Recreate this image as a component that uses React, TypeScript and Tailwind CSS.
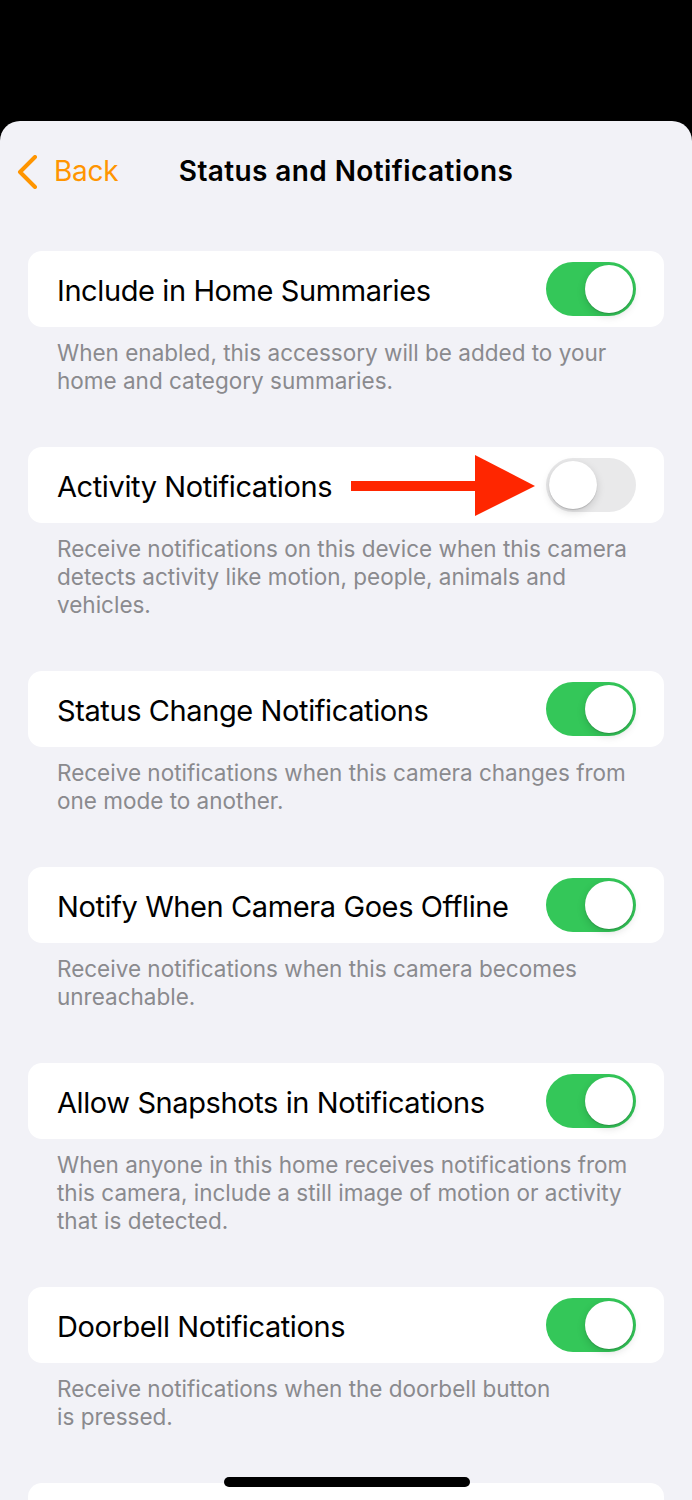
import React from 'react';

type Row = { title: string; footer: React.ReactNode; on: boolean; arrow?: boolean };

const rows: Row[] = [
  {
    title: 'Include in Home Summaries',
    footer: 'When enabled, this accessory will be added to your home and category summaries.',
    on: true,
  },
  {
    title: 'Activity Notifications',
    footer: 'Receive notifications on this device when this camera detects activity like motion, people, animals and vehicles.',
    on: false,
    arrow: true,
  },
  {
    title: 'Status Change Notifications',
    footer: 'Receive notifications when this camera changes from one mode to another.',
    on: true,
  },
  {
    title: 'Notify When Camera Goes Offline',
    footer: 'Receive notifications when this camera becomes unreachable.',
    on: true,
  },
  {
    title: 'Allow Snapshots in Notifications',
    footer: 'When anyone in this home receives notifications from this camera, include a still image of motion or activity that is detected.',
    on: true,
  },
  {
    title: 'Doorbell Notifications',
    footer: (
      <>
        Receive notifications when the doorbell button
        <br />
        is pressed.
      </>
    ),
    on: true,
  },
];

function Toggle({ on }: { on: boolean }) {
  return (
    <div
      className={`relative w-[90px] h-[54px] rounded-full shrink-0 ${on ? 'bg-[#34c759]' : 'bg-[#e9e9ea]'}`}
    >
      <div
        className={`absolute top-[3px] w-[48px] h-[48px] rounded-full bg-white shadow-[0_3px_8px_rgba(0,0,0,0.15),0_1px_1px_rgba(0,0,0,0.16)] ${on ? 'right-[3px]' : 'left-[3px]'}`}
      />
    </div>
  );
}

function Arrow() {
  return (
    <svg className="absolute left-[323px] top-[8px]" width="186" height="62" viewBox="0 0 186 62">
      <rect x="0" y="26" width="126" height="10" fill="#ff2600" />
      <polygon points="124,0 184,31 124,61" fill="#ff2600" />
    </svg>
  );
}

export default function App() {
  return (
    <div className="w-[692px] h-[1500px] bg-black overflow-hidden" style={{ fontFamily: 'Inter, "Noto Sans", sans-serif' }}>
      <div className="mt-[121px] h-[1379px] bg-[#f2f2f7] rounded-t-[20px] overflow-hidden">
        <div className="relative h-[100px] flex items-center">
          <div className="flex items-center pl-[16px] text-[#ff9500]">
            <svg width="22" height="34" viewBox="0 0 22 34" className="mt-[1px]">
              <path d="M19 2 L4 17 L19 32" fill="none" stroke="#ff9500" strokeWidth="4" strokeLinecap="round" strokeLinejoin="round" />
            </svg>
            <span className="ml-[16px] text-[28px] tracking-[-0.3px]">Back</span>
          </div>
          <div className="absolute left-0 right-0 text-center text-[28px] font-semibold text-black tracking-[0.4px]">
            Status and Notifications
          </div>
        </div>

        <div className="px-[28px] pt-[30px]">
          {rows.map((r) => (
            <div key={r.title} className="mb-[52px]">
              <div className="relative h-[76px] bg-white rounded-[14px] flex items-center justify-between pl-[29px] pr-[28px]">
                <span className="pt-[4px] text-[29px] text-black tracking-[-0.4px]">{r.title}</span>
                {r.arrow && <Arrow />}
                <Toggle on={r.on} />
              </div>
              <p className="px-[29px] pt-[12px] text-[22.5px] leading-[28px] text-[#8a8a8e]">
                {r.footer}
              </p>
            </div>
          ))}
          <div className="h-[76px] bg-white rounded-[14px]" />
        </div>
      </div>
      <div className="absolute left-[224px] top-[1477px] w-[246px] h-[10px] rounded-full bg-black" />
    </div>
  );
}
